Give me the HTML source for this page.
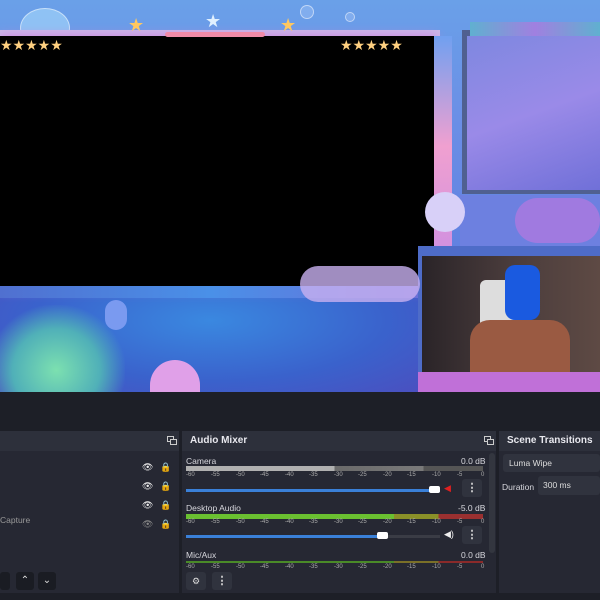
<!DOCTYPE html>
<html><head><meta charset="utf-8"><style>
*{margin:0;padding:0;box-sizing:border-box}
body{width:600px;height:600px;overflow:hidden;background:#1d1f27;font-family:"Liberation Sans",sans-serif;position:relative;color:#d8dae0}
.a{position:absolute}
.hdr{background:#2d303b;height:20px;font-weight:bold;font-size:10px;line-height:20px;color:#e8e8ee}
.panel{background:#262833}
.t{font-size:8.5px;color:#d8d8de}
.tick{font-size:6px;color:#aaa;position:absolute}
.btn{background:#30333e;border-radius:3px;position:absolute}
.st{position:absolute;font-size:14px;line-height:14px}
.bub{position:absolute;border-radius:50%;border:1px solid rgba(255,255,255,.5);background:rgba(200,220,255,.25)}
</style></head><body>
<!-- canvas -->
<div class="a" style="left:0;top:0;width:600px;height:392px;background:linear-gradient(180deg,#6aa0e8 0%,#6b8fe6 30%,#5f7fe0 70%,#4a6ad0 100%)"></div>
<div class="bub" style="left:20px;top:8px;width:50px;height:40px;background:rgba(180,230,255,.5)"></div>
<div class="bub" style="left:300px;top:5px;width:14px;height:14px"></div>
<div class="bub" style="left:345px;top:12px;width:10px;height:10px"></div>
<div class="a" style="left:0;top:290px;width:420px;height:102px;background:radial-gradient(ellipse at 50% 30%,#3a88e0,#3a62cc 60%,#4a50c0)"></div>
<div class="a" style="left:0;top:305px;width:125px;height:87px;background:radial-gradient(ellipse at 45% 75%,#7ce0b0,#50b0b8 45%,transparent 72%)"></div>
<div class="a" style="left:150px;top:360px;width:50px;height:32px;border-radius:25px 25px 0 0;background:#e0a0e8"></div>
<div class="a" style="left:105px;top:300px;width:22px;height:30px;border-radius:11px;background:#7a9af0"></div>
<div class="a" style="left:0;top:30px;width:440px;height:6px;background:#c8b8e8"></div>
<div class="a" style="left:0;top:36px;width:436px;height:254px;background:#000;box-shadow:0 0 10px #d080e0"></div>
<div class="a" style="left:0;top:286px;width:420px;height:12px;background:linear-gradient(90deg,#5070d0,#4a90e8,#6a70d8)"></div>
<div class="a" style="left:434px;top:36px;width:18px;height:220px;background:linear-gradient(180deg,#70a0f0,#f0a0d0 50%,#d090e0)"></div>
<div class="st" style="left:0;top:38px;color:#ffd080">★★★★★</div>
<div class="st" style="left:340px;top:38px;color:#ffd080">★★★★★</div>
<div class="st" style="left:128px;top:18px;color:#ffc860;font-size:18px">★</div>
<div class="st" style="left:205px;top:14px;color:#e0f0ff;font-size:18px">★</div>
<div class="st" style="left:280px;top:18px;color:#ffc860;font-size:18px">★</div>
<div class="a" style="left:165px;top:32px;width:100px;height:5px;background:#f08aa8;border-radius:3px"></div>
<div class="a" style="left:462px;top:30px;width:138px;height:164px;background:#506090"></div>
<div class="a" style="left:467px;top:36px;width:133px;height:154px;background:linear-gradient(160deg,#7e88e0,#9a8ae8 50%,#7070d8)"></div>
<div class="a" style="left:470px;top:22px;width:130px;height:14px;background:linear-gradient(90deg,#60b0d0,#a080e0,#60b0d0)"></div>
<div class="a" style="left:460px;top:195px;width:140px;height:55px;background:#6d80e0"></div>
<div class="a" style="left:515px;top:198px;width:85px;height:45px;border-radius:30px;background:#a07ae0"></div>
<div class="a" style="left:418px;top:246px;width:182px;height:130px;background:#4e6cc8"></div>
<div class="a" style="left:422px;top:256px;width:178px;height:116px;background:linear-gradient(90deg,#2a2428,#4a3c3c 50%,#5e4a44)"></div>
<div class="a" style="left:480px;top:280px;width:40px;height:60px;background:#ddd;border-radius:6px"></div>
<div class="a" style="left:470px;top:320px;width:100px;height:52px;background:#9a5a42;border-radius:20px 20px 0 0"></div>
<div class="a" style="left:505px;top:265px;width:35px;height:55px;background:#1a5ae0;border-radius:10px"></div>
<div class="a" style="left:418px;top:372px;width:182px;height:20px;background:#c070d8"></div>
<div class="a" style="left:300px;top:266px;width:120px;height:36px;border-radius:18px;background:#c8b0f0;opacity:.8"></div>
<div class="a" style="left:425px;top:192px;width:40px;height:40px;border-radius:20px;background:#d8d0f8"></div>
<!-- dark bar -->
<div class="a" style="left:0;top:392px;width:600px;height:39px;background:#1d1f27"></div>
<!-- left panel -->
<div class="a panel" style="left:0;top:431px;width:179px;height:162px"></div>
<div class="a hdr" style="left:0;top:431px;width:179px"></div>
<div class="a" style="left:167px;top:436px;width:7px;height:6px;border:1px solid #ccc"></div>
<div class="a" style="left:170px;top:439px;width:7px;height:6px;border:1px solid #ccc;background:#2d303b"></div>
<div class="a t" style="left:0;top:515px;color:#999">Capture</div>
<div class="a" style="left:142px;top:458px;font-size:9px;color:#eee;line-height:19px">👁<br>👁<br>👁<br><span style="color:#888">👁</span></div>
<div class="a" style="left:160px;top:458px;font-size:9px;color:#eee;line-height:19px">🔒<br>🔒<br>🔒<br>🔒</div>
<div class="btn" style="left:0;top:572px;width:10px;height:18px;background:#1a1c23"></div>
<div class="btn" style="left:16px;top:572px;width:18px;height:18px;background:#1a1c23;color:#ddd;font-size:10px;text-align:center;line-height:18px">⌃</div>
<div class="btn" style="left:38px;top:572px;width:18px;height:18px;background:#1a1c23;color:#ddd;font-size:10px;text-align:center;line-height:18px">⌄</div>
<!-- audio mixer -->
<div class="a panel" style="left:182px;top:431px;width:314px;height:162px"></div>
<div class="a hdr" style="left:182px;top:431px;width:314px;padding-left:8px">Audio Mixer</div>
<div class="a" style="left:484px;top:436px;width:7px;height:6px;border:1px solid #ccc"></div>
<div class="a" style="left:487px;top:439px;width:7px;height:6px;border:1px solid #ccc;background:#2d303b"></div>
<div class="a" style="left:489px;top:453px;width:6px;height:100px;background:#33363f;border-radius:3px"></div>

<div class="a t" style="left:186px;top:456px">Camera</div>
<div class="a t" style="left:461px;top:456px">0.0 dB</div>
<div class="a" style="left:186px;top:466px;width:297px;height:5px;background:linear-gradient(90deg,#b0b0b0 0,#b0b0b0 50%,#6a6a6a 50%,#7a7a7a 80%,#555 80%)"></div>
<div class="a" style="left:186px;top:489px;width:254px;height:3px;background:#3a80d8"></div>
<div class="a" style="left:429px;top:486px;width:11px;height:7px;background:#fff;border-radius:2px"></div>
<div class="a" style="left:444px;top:483px;color:#e02020;font-size:9px">◀</div>
<div class="btn" style="left:462px;top:479px;width:20px;height:18px;color:#ddd;text-align:center;font-size:11px;line-height:18px;font-weight:bold">⋮</div>

<div class="a t" style="left:186px;top:503px">Desktop Audio</div>
<div class="a t" style="left:458px;top:503px">-5.0 dB</div>
<div class="a" style="left:186px;top:514px;width:297px;height:5px;background:linear-gradient(90deg,#6ac030 0,#6ac030 70%,#8a9028 70%,#8a9028 85%,#9a3030 85%)"></div>
<div class="a" style="left:186px;top:535px;width:196px;height:3px;background:#3a80d8"></div>
<div class="a" style="left:382px;top:535px;width:58px;height:3px;background:#3a3c45"></div>
<div class="a" style="left:377px;top:532px;width:11px;height:7px;background:#fff;border-radius:2px"></div>
<div class="a" style="left:444px;top:529px;color:#eee;font-size:9px">◀)</div>
<div class="btn" style="left:462px;top:526px;width:20px;height:18px;color:#ddd;text-align:center;font-size:11px;line-height:18px;font-weight:bold">⋮</div>

<div class="a t" style="left:186px;top:550px">Mic/Aux</div>
<div class="a t" style="left:461px;top:550px">0.0 dB</div>
<div class="a" style="left:186px;top:561px;width:297px;height:2px;background:linear-gradient(90deg,#4a8a28 0,#4a8a28 70%,#7a7028 70%,#7a7028 85%,#8a2a2a 85%)"></div>
<div class="btn" style="left:186px;top:572px;width:20px;height:18px;color:#ddd;text-align:center;font-size:9px;line-height:18px">⚙</div>
<div class="btn" style="left:212px;top:572px;width:20px;height:18px;color:#ddd;text-align:center;font-size:11px;line-height:18px;font-weight:bold">⋮</div>

<div class="a" style="left:186px;top:472px;width:300px;height:10px">
<span class="tick" style="left:0">-60</span><span class="tick" style="left:25px">-55</span><span class="tick" style="left:50px">-50</span><span class="tick" style="left:74px">-45</span><span class="tick" style="left:99px">-40</span><span class="tick" style="left:123px">-35</span><span class="tick" style="left:148px">-30</span><span class="tick" style="left:172px">-25</span><span class="tick" style="left:197px">-20</span><span class="tick" style="left:221px">-15</span><span class="tick" style="left:246px">-10</span><span class="tick" style="left:271px">-5</span><span class="tick" style="left:295px">0</span></div>
<div class="a" style="left:186px;top:519px;width:300px;height:10px">
<span class="tick" style="left:0">-60</span><span class="tick" style="left:25px">-55</span><span class="tick" style="left:50px">-50</span><span class="tick" style="left:74px">-45</span><span class="tick" style="left:99px">-40</span><span class="tick" style="left:123px">-35</span><span class="tick" style="left:148px">-30</span><span class="tick" style="left:172px">-25</span><span class="tick" style="left:197px">-20</span><span class="tick" style="left:221px">-15</span><span class="tick" style="left:246px">-10</span><span class="tick" style="left:271px">-5</span><span class="tick" style="left:295px">0</span></div>
<div class="a" style="left:186px;top:564px;width:300px;height:10px">
<span class="tick" style="left:0">-60</span><span class="tick" style="left:25px">-55</span><span class="tick" style="left:50px">-50</span><span class="tick" style="left:74px">-45</span><span class="tick" style="left:99px">-40</span><span class="tick" style="left:123px">-35</span><span class="tick" style="left:148px">-30</span><span class="tick" style="left:172px">-25</span><span class="tick" style="left:197px">-20</span><span class="tick" style="left:221px">-15</span><span class="tick" style="left:246px">-10</span><span class="tick" style="left:271px">-5</span><span class="tick" style="left:295px">0</span></div>
<!-- scene transitions -->
<div class="a panel" style="left:499px;top:431px;width:101px;height:162px"></div>
<div class="a hdr" style="left:499px;top:431px;width:101px;padding-left:8px">Scene Transitions</div>
<div class="btn" style="left:503px;top:454px;width:97px;height:18px;font-size:8.5px;line-height:18px;padding-left:6px;color:#ddd">Luma Wipe</div>
<div class="a t" style="left:502px;top:482px">Duration</div>
<div class="btn" style="left:538px;top:476px;width:62px;height:19px;font-size:8.5px;line-height:19px;padding-left:5px;color:#ddd">300 ms</div>
</body></html>
